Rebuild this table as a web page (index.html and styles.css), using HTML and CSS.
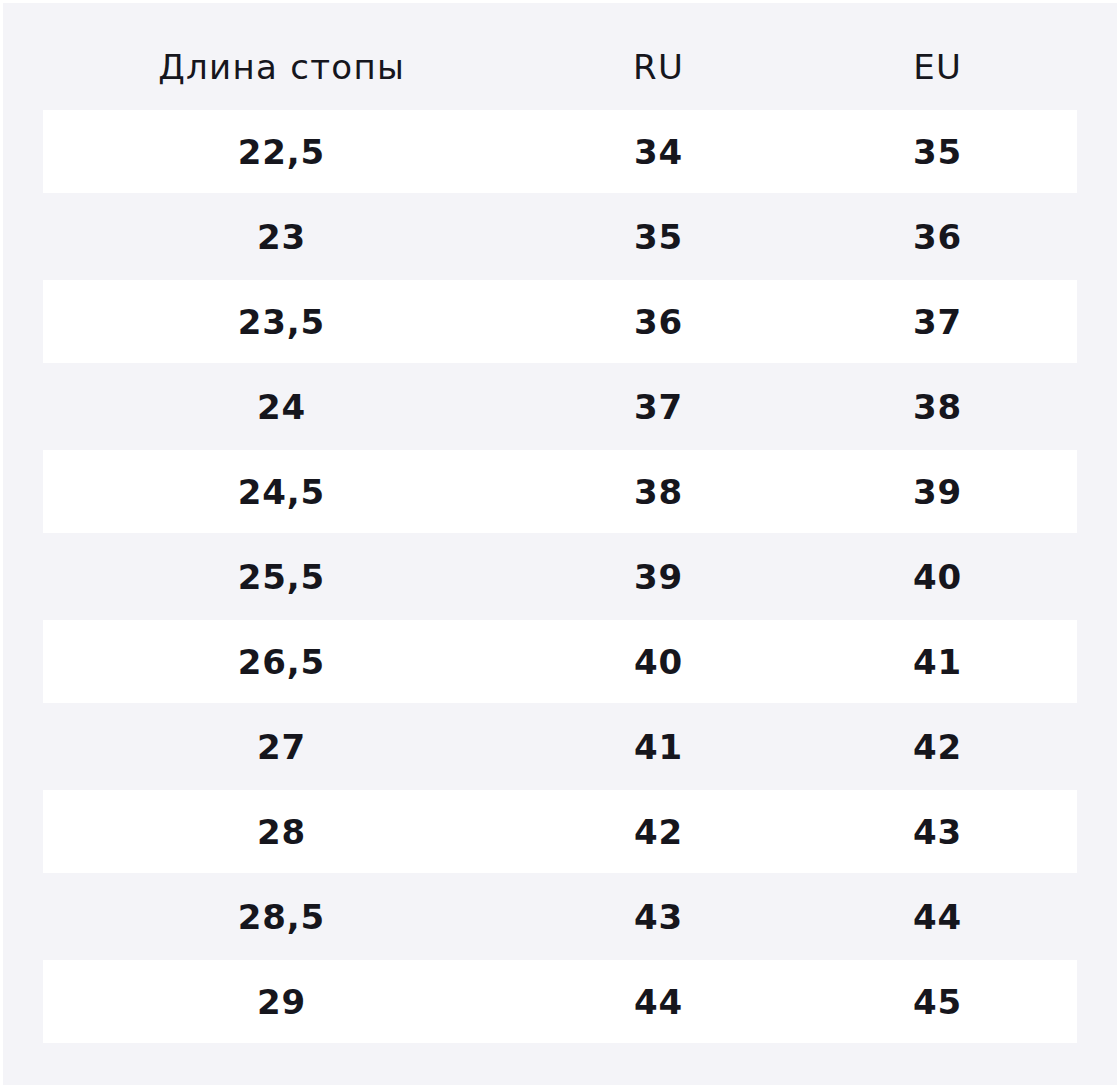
FILE: index.html
```html
<!DOCTYPE html>
<html lang="ru">
<head>
<meta charset="utf-8">
<title>Размеры</title>
<link rel="stylesheet" href="styles.css">
</head>
<body>
<div class="panel">
  <table class="sizes">
    <colgroup>
      <col class="c1"><col class="c2"><col class="c3">
    </colgroup>
    <thead>
      <tr><th>Длина стопы</th><th>RU</th><th>EU</th></tr>
    </thead>
    <tbody>
      <tr><td>22,5</td><td>34</td><td>35</td></tr>
      <tr><td>23</td><td>35</td><td>36</td></tr>
      <tr><td>23,5</td><td>36</td><td>37</td></tr>
      <tr><td>24</td><td>37</td><td>38</td></tr>
      <tr><td>24,5</td><td>38</td><td>39</td></tr>
      <tr><td>25,5</td><td>39</td><td>40</td></tr>
      <tr><td>26,5</td><td>40</td><td>41</td></tr>
      <tr><td>27</td><td>41</td><td>42</td></tr>
      <tr><td>28</td><td>42</td><td>43</td></tr>
      <tr><td>28,5</td><td>43</td><td>44</td></tr>
      <tr><td>29</td><td>44</td><td>45</td></tr>
    </tbody>
  </table>
</div>
</body>
</html>
```
FILE: styles.css
```css
html, body {
  margin: 0;
  padding: 0;
  background: #ffffff;
}
body {
  padding: 3px;
  font-family: "DejaVu Sans", "Liberation Sans", sans-serif;
  color: #16161d;
}
.panel {
  background: #f4f4f8;
  padding: 20px 40px 42px;
}
.sizes {
  width: 100%;
  border-collapse: collapse;
  table-layout: fixed;
}
.c1 { width: 476px; }
.c2 { width: 278px; }
.c3 { width: 280px; }
.sizes th,
.sizes td {
  padding: 0;
  text-align: center;
  vertical-align: middle;
  font-size: 34px;
  line-height: 1;
}
.sizes th {
  font-weight: normal;
  height: 87px;
  letter-spacing: 1.3px;
  padding-left: 1.3px;
}
.sizes td {
  font-weight: bold;
  letter-spacing: 0.9px;
  padding-left: 0.9px;
}
.sizes tbody tr:nth-child(odd) td {
  background: #ffffff;
  height: 83px;
}
.sizes tbody tr:nth-child(even) td {
  height: 87px;
}
```
